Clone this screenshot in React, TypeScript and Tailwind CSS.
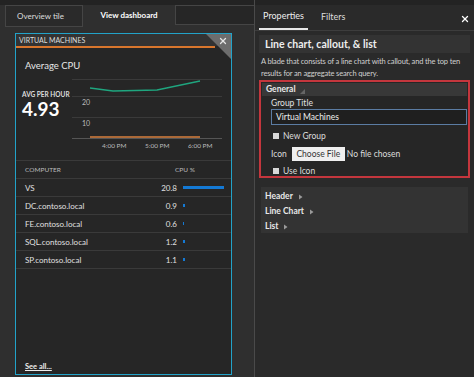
import { X } from "lucide-react";

const rows = [
  { name: "VS", value: "20.8", bar: 41 },
  { name: "DC.contoso.local", value: "0.9", bar: 2 },
  { name: "FE.contoso.local", value: "0.6", bar: 1 },
  { name: "SQL.contoso.local", value: "1.2", bar: 2 },
  { name: "SP.contoso.local", value: "1.1", bar: 2 },
];

function Caret() {
  return (
    <svg width="5" height="6" viewBox="0 0 5 6" className="ml-[5px] inline-block">
      <path d="M1 0.5 L4.5 3 L1 5.5 Z" fill="#9a9a9a" />
    </svg>
  );
}

function Chart() {
  return (
    <div className="relative w-[150px] h-[78px]">
      <svg width="150" height="78" viewBox="0 0 150 78" className="absolute left-0 top-0">
        <line x1="0" y1="0.5" x2="150" y2="0.5" stroke="#3a3a3a" />
        <line x1="0" y1="17.5" x2="150" y2="17.5" stroke="#3a3a3a" />
        <line x1="0" y1="38.5" x2="150" y2="38.5" stroke="#3a3a3a" />
        <line x1="0" y1="59.5" x2="150" y2="59.5" stroke="#555" />
        <polyline points="18,9 41,12 85,11 128,2" fill="none" stroke="#1fa67f" strokeWidth="1.3" />
        <line x1="18" y1="58" x2="128" y2="58" stroke="#d9803f" strokeWidth="1.6" />
      </svg>
      <span className="absolute left-[10px] top-[18px] text-[7px] text-[#bbb]">20</span>
      <span className="absolute left-[10px] top-[39px] text-[7px] text-[#bbb]">10</span>
      <span className="absolute left-[30px] top-[62px] text-[6.5px] text-[#bbb]">4:00 PM</span>
      <span className="absolute left-[73px] top-[62px] text-[6.5px] text-[#bbb]">5:00 PM</span>
      <span className="absolute left-[116px] top-[62px] text-[6.5px] text-[#bbb]">6:00 PM</span>
    </div>
  );
}

function Tile() {
  return (
    <div className="relative ml-[15px] mt-[6px] w-[217px] h-[342px] border border-[#22a3c9] bg-[#262626] flex flex-col">
      {/* corner */}
      <div className="absolute right-0 top-0 w-0 h-0 border-t-[25px] border-l-[25px] border-t-[#6d6d6d] border-l-transparent" />
      <X className="absolute right-[3px] top-[2px] text-[#e5e5e5]" size={10} strokeWidth={3} />
      <div className="h-[12px] bg-[#333] pl-[3px] text-[7px] leading-[12px] text-[#ddd]">VIRTUAL MACHINES</div>
      <div className="h-[2px] mr-[16px] bg-[#d8762d]" />
      <div className="pl-[9px] pt-[12px] text-[9.5px] leading-[12px] text-[#e6e6e6]">Average CPU</div>
      <div className="flex mt-[7px]">
        <div className="w-[56px] pl-[6px] pt-[12px]">
          <div className="text-[6.5px] font-bold text-[#ddd] leading-[8px]">AVG PER HOUR</div>
          <div className="text-[19px] font-bold text-white leading-[19px]">4.93</div>
        </div>
        <Chart />
      </div>
      <div className="mt-[3px] border-t border-[#3a3a3a]">
        <div className="h-[18px] flex items-center border-b border-[#3a3a3a] pl-[9px] text-[6.5px] text-[#bbb]">
          <span className="w-[150px]">COMPUTER</span>
          <span>CPU %</span>
        </div>
        {rows.map((r) => (
          <div key={r.name} className="h-[18px] flex items-center border-b border-[#3a3a3a] pl-[9px] text-[8px] text-[#e0e0e0]">
            <span className="flex-1">{r.name}</span>
            <span className="w-[30px] text-right">{r.value}</span>
            <span className="w-[54px] pl-[6px] flex items-center">
              <span className="h-[3px] bg-[#1479d4] block" style={{ width: r.bar }} />
            </span>
          </div>
        ))}
      </div>
      <div className="flex-1" />
      <div className="pl-[9px] pb-[2px] text-[7.5px] font-bold text-[#eee] underline">See all...</div>
    </div>
  );
}

export default function App() {
  return (
    <div
      className="w-[474px] h-[377px] flex bg-[#2a2a2a] overflow-hidden"
      style={{ fontFamily: 'Lato, "Open Sans", sans-serif' }}
    >
      {/* left dashboard */}
      <div className="w-[254px] flex flex-col bg-[#2f2f2f]">
        <div className="h-[5px] bg-[#232323]" />
        <div className="flex h-[22px] pl-[5px]">
          <div className="w-[78px] border border-[#454545] bg-[#2a2a2a] text-[8px] text-[#ddd] pl-[11px] leading-[20px]">
            Overview tile
          </div>
          <div className="w-[92px] text-[8px] font-bold text-white leading-[20px] text-center">
            View dashboard
          </div>
          <div className="flex-1 h-[20px] border border-[#454545] border-r-0 bg-[#262626]" />
        </div>
        <Tile />
      </div>
      {/* right properties */}
      <div className="flex-1 border-l border-[#4a4a4a] bg-[#2a2a2a] flex flex-col">
        <div className="h-[5px] bg-[#232323]" />
        <div className="flex items-end h-[26px] border-b border-[#3d3d3d] px-[4px]">
          <div className="w-[49px] h-[26px] flex items-center justify-center border-b-2 border-[#e8e8e8] text-[9px] text-[#eee]">
            Properties
          </div>
          <div className="ml-[13px] h-[26px] flex items-center text-[9px] text-[#ddd]">Filters</div>
          <div className="flex-1" />
          <X className="mb-[6px] text-white" size={10} strokeWidth={3} />
        </div>
        <div className="mx-[4px] mt-[4px] h-[18px] bg-[#333] pl-[6px] text-[10.5px] font-bold leading-[18px] text-[#eee]">
          Line chart, callout, &amp; list
        </div>
        <div className="pl-[6px] pr-[1px] pt-[3px] text-[7.5px] tracking-[-0.15px] leading-[12px] text-[#d0d0d0]">
          A blade that consists of a line chart with callout, and the top ten results for an aggregate search query.
        </div>
        <div className="mx-[4px] h-[98px] border-2 border-[#c4363d] bg-[#262626]">
          <div className="mx-[1px] mt-[1px] h-[13px] bg-[#383838] pl-[4px] flex items-center text-[8.5px] font-bold text-[#e8e8e8]">
            General
            <svg width="5" height="5" viewBox="0 0 5 5" className="ml-[4px] mt-[3px]">
              <path d="M5 0 L5 5 L0 5 Z" fill="#666" />
            </svg>
          </div>
          <div className="pl-[10px] pt-[2px] text-[8.5px] text-[#e0e0e0] leading-[11px]">Group Title</div>
          <div className="ml-[10px] mr-[1px] h-[16px] border border-[#5b7ca3] bg-[#1f1f1f] pl-[4px] text-[8.5px] leading-[14px] text-[#eee]">
            Virtual Machines
          </div>
          <div className="flex items-center h-[12px] pl-[12px] mt-[5px] text-[8.5px] text-[#ddd]">
            <span className="w-[6px] h-[6px] bg-[#d8d8d8] mr-[4px]" />
            New Group
          </div>
          <div className="flex items-center h-[14px] pl-[10px] mt-[5px] text-[8.5px] text-[#ddd]">
            Icon
            <span className="ml-[5px] h-[14px] w-[53px] bg-[#efefef] text-[#333] text-center leading-[14px]">Choose File</span>
            <span className="ml-[2px]">No file chosen</span>
          </div>
          <div className="flex items-center h-[12px] pl-[12px] mt-[4px] text-[8.5px] text-[#ddd]">
            <span className="w-[6px] h-[6px] bg-[#d8d8d8] mr-[4px]" />
            Use Icon
          </div>
        </div>
        <div className="mx-[6px] mt-[9px] h-[46px] bg-[#333] pl-[4px] pt-[2px] text-[8.5px] font-bold text-[#e8e8e8]">
          <div className="h-[15px] flex items-center">Header<Caret /></div>
          <div className="h-[15px] flex items-center">Line Chart<Caret /></div>
          <div className="h-[15px] flex items-center">List<Caret /></div>
        </div>
      </div>
    </div>
  );
}
